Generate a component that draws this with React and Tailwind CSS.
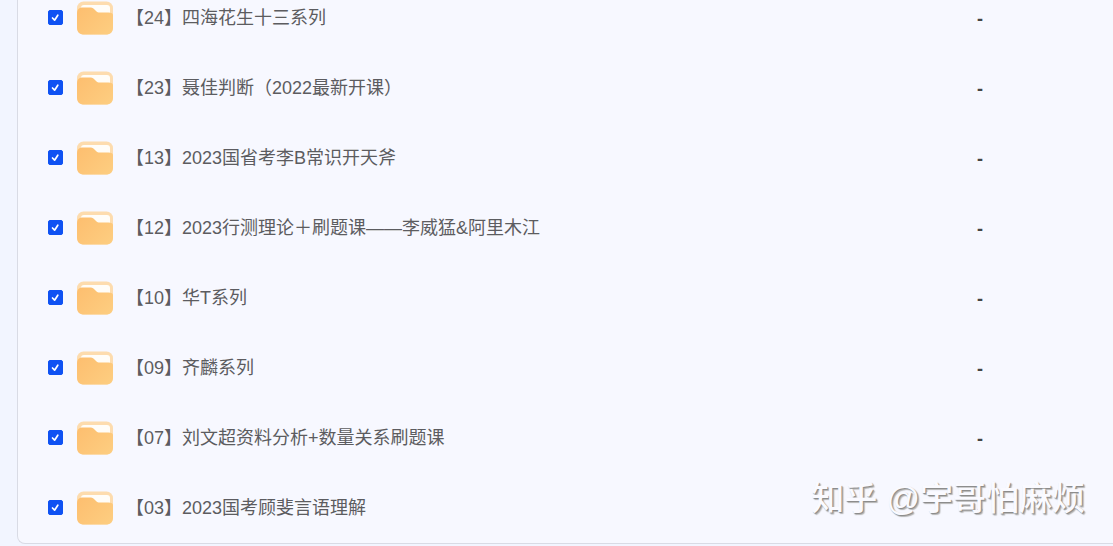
const folders = [
    { id: "24", name: "四海花生十三系列" },
    { id: "23", name: "聂佳判断（2022最新开课）" },
    { id: "13", name: "2023国省考李B常识开天斧" },
    { id: "12", name: "2023行测理论＋刷题课——李威猛&阿里木江" },
    { id: "10", name: "华T系列" },
    { id: "09", name: "齐麟系列" },
    { id: "07", name: "刘文超资料分析+数量关系刷题课" },
    { id: "03", name: "2023国考顾斐言语理解" },
];

function FolderIcon() {
    return (<svg width="36" height="34" viewBox="0 0 36 34" fill="none" className="block" aria-hidden="true">
      <defs>
        <linearGradient id="folder-front" x1="4" y1="6" x2="32" y2="34" gradientUnits="userSpaceOnUse">
          <stop stopColor="#fdbf70"/>
          <stop offset="1" stopColor="#fdcd80"/>
        </linearGradient>
      </defs>
      <rect y="0.500" width="36" height="33" rx="6.500" fill="#fddcae"/>
      <rect x="4" y="4" width="29" height="12" rx="3" fill="#fffdf8"/>
      <path d="M0 12.500C0 8.500 2 6.500 6 6.500h6.500c2 0 3.200.400 4.500 1.600l2 2c1.200 1.100 2.200 1.500 3.700 1.500H31.500c3 0 4.500.8 4.500 3v11.900c0 4.500-2.500 7-7 7H7c-4.500 0-7-2.500-7-7Z" fill="url(#folder-front)"/>
    </svg>);
}

function Checkbox({ id }) {
    return (<span className="relative block size-[15px]">
      <input id={id} type="checkbox" defaultChecked className="peer block size-[15px] appearance-none rounded-[2px] border border-[#c5c9d6] checked:border-[#0f52f3] checked:bg-[#0f52f3]"/>
      <svg viewBox="0 0 15 15" fill="none" className="pointer-events-none absolute inset-0 hidden peer-checked:block" aria-hidden="true">
        <path d="M4.500 8l2.100 2.200L9.800 5.200" stroke="#fff" strokeWidth="1.700" strokeLinecap="round" strokeLinejoin="round"/>
      </svg>
    </span>);
}

function FolderRow({ folder }) {
    const inputId = `folder-${folder.id}`;
    return (<tr className="h-[70px]">
      <td className="p-0 pb-px pl-[30px]">
        <div className="flex items-center">
          <Checkbox id={inputId}/>
          <label htmlFor={inputId} className="flex items-center">
            <span className="ml-3.5 mr-[13px]">
              <FolderIcon />
            </span>
            <span className="whitespace-nowrap">【{folder.id}】{folder.name}</span>
          </label>
        </div>
      </td>
      <td className="w-[136px] p-0 pt-0.5 font-bold text-[#444]">-</td>
    </tr>);
}

export default function App() {
    return (<main className="relative min-h-screen overflow-hidden bg-[#f2f5ff] pl-[17px] font-['Liberation_Sans','Noto_Sans_CJK_SC',sans-serif] text-[18px] leading-6 text-[#5c5c60]">
      {/* The list is scrolled, its first row is partly out of view */}
      <section className="-mt-[17px] rounded-bl-lg border-b border-l border-[#d9dbe5] bg-[#f7f8ff]">
        <table className="w-full border-collapse">
          <tbody>
            {folders.map((folder) => (<FolderRow key={folder.id} folder={folder}/>))}
          </tbody>
        </table>
      </section>

      <p className="pointer-events-none absolute right-7 bottom-[27px] text-[33px] leading-10 font-medium whitespace-nowrap text-[#fafaff] [text-shadow:1px_1px_1px_#888,2px_2px_1px_#bbb]">
        知乎 @宇哥怕麻烦
      </p>
    </main>);
}
